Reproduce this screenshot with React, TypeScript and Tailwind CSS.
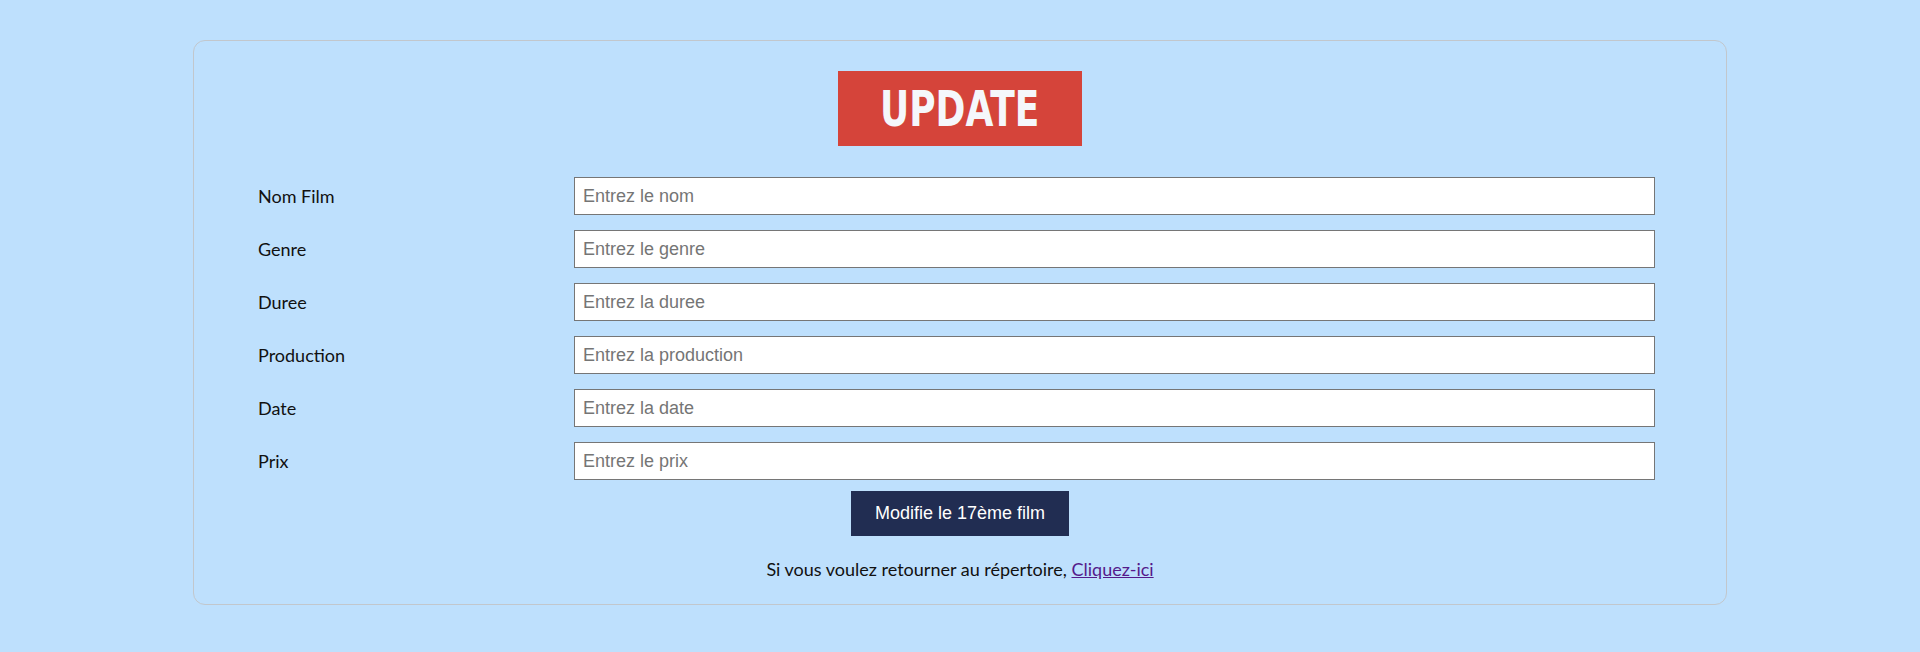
import React from 'react';

const fields = [
  { label: 'Nom Film', placeholder: 'Entrez le nom' },
  { label: 'Genre', placeholder: 'Entrez le genre' },
  { label: 'Duree', placeholder: 'Entrez la duree' },
  { label: 'Production', placeholder: 'Entrez la production' },
  { label: 'Date', placeholder: 'Entrez la date' },
  { label: 'Prix', placeholder: 'Entrez le prix' },
];

const App: React.FC = () => {
  return (
    <div className="min-h-screen bg-[#bee0fd] pt-[40px] font-['Lato',sans-serif]">
      <div className="mx-auto w-[1534px] rounded-[12px] border border-[#c2c7cc] px-[64px] pt-[30px] pb-[23px]">
        {/* logo */}
        <div className="flex justify-center">
          <div className="flex h-[75px] w-[244px] items-center justify-center bg-[#d5443a]">
            <span className="inline-block scale-x-[0.8] font-['Liberation_Sans_Narrow','DejaVu_Sans_Condensed',sans-serif] text-[50px] font-bold leading-none text-[#f5f7fb]">
              UPDATE
            </span>
          </div>
        </div>

        <form className="mt-[31px] mr-[7px] grid grid-cols-[316px_1fr] gap-y-[15px]" onSubmit={(e) => e.preventDefault()}>
          {fields.map((f) => (
            <React.Fragment key={f.label}>
              <label className="flex items-center text-[18px] text-[#111]">{f.label}</label>
              <input
                type="text"
                placeholder={f.placeholder}
                className="h-[38px] w-full border border-[#767676] bg-white px-[8px] font-['Liberation_Sans',Arial,sans-serif] text-[18px] text-black placeholder:text-[#757575] focus:outline-none"
              />
            </React.Fragment>
          ))}
        </form>

        <div className="mt-[11px] flex justify-center">
          <button
            type="button"
            className="h-[45px] w-[218px] bg-[#212d52] font-['Liberation_Sans',Arial,sans-serif] text-[18px] text-white"
          >
            Modifie le 17ème film
          </button>
        </div>

        <p className="mt-[21px] text-center text-[18px] leading-[24px] text-[#111]">
          Si vous voulez retourner au répertoire,{' '}
          <a href="#" className="text-[#551a8b] underline">
            Cliquez-ici
          </a>
        </p>
      </div>
    </div>
  );
};

export default App;
